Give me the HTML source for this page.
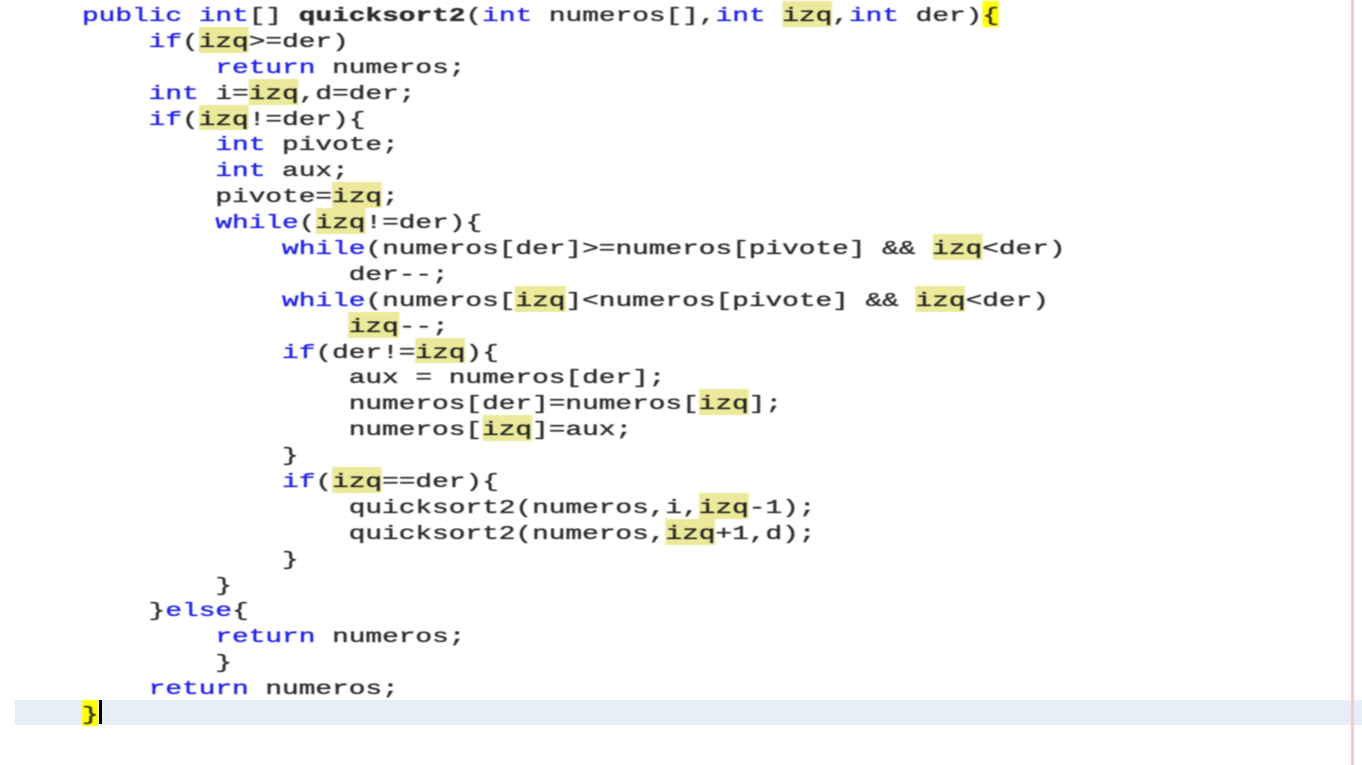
<!DOCTYPE html>
<html><head><meta charset="utf-8">
<style>
html,body{margin:0;padding:0;width:1362px;height:765px;overflow:hidden;background:#fff}
#cur{position:absolute;left:15px;top:700px;width:1347px;height:25px;background:#e8eef8}
#margin{position:absolute;left:1351px;top:0;width:3px;height:765px;background:#ffc4c4}
#code{position:absolute;left:82px;top:1px;transform-origin:0 0;transform:scaleX(1.462);font:19px/31.9px "Liberation Mono",monospace;color:#2a2a2a;filter:blur(.5px);-webkit-text-stroke:.35px currentColor}
#code div{height:25.9px;white-space:pre}
b{font-weight:normal;color:#2020e6}
i{font-style:normal;display:inline-block;height:25.9px;background:#ecea9a;color:#222;vertical-align:top}
u{text-decoration:none;display:inline-block;height:25.9px;background:#ffff00;vertical-align:top}
.q{font-weight:bold}
#caret{position:absolute;left:99px;top:700px;width:3px;height:24px;background:#000}
</style></head>
<body>
<div id="cur"></div>
<div id="margin"></div>
<div id="code"><div><b>public</b> <b>int</b>[] <span class="q">quicksort2</span>(<b>int</b> numeros[],<b>int</b> <i>izq</i>,<b>int</b> der)<u>{</u></div><div>    <b>if</b>(<i>izq</i>&gt;=der)</div><div>        <b>return</b> numeros;</div><div>    <b>int</b> i=<i>izq</i>,d=der;</div><div>    <b>if</b>(<i>izq</i>!=der){</div><div>        <b>int</b> pivote;</div><div>        <b>int</b> aux;</div><div>        pivote=<i>izq</i>;</div><div>        <b>while</b>(<i>izq</i>!=der){</div><div>            <b>while</b>(numeros[der]&gt;=numeros[pivote] &amp;&amp; <i>izq</i>&lt;der)</div><div>                der--;</div><div>            <b>while</b>(numeros[<i>izq</i>]&lt;numeros[pivote] &amp;&amp; <i>izq</i>&lt;der)</div><div>                <i>izq</i>--;</div><div>            <b>if</b>(der!=<i>izq</i>){</div><div>                aux = numeros[der];</div><div>                numeros[der]=numeros[<i>izq</i>];</div><div>                numeros[<i>izq</i>]=aux;</div><div>            }</div><div>            <b>if</b>(<i>izq</i>==der){</div><div>                quicksort2(numeros,i,<i>izq</i>-1);</div><div>                quicksort2(numeros,<i>izq</i>+1,d);</div><div>            }</div><div>        }</div><div>    }<b>else</b>{</div><div>        <b>return</b> numeros;</div><div>        }</div><div>    <b>return</b> numeros;</div><div><u>}</u></div></div>
<div id="caret"></div>
</body></html>
